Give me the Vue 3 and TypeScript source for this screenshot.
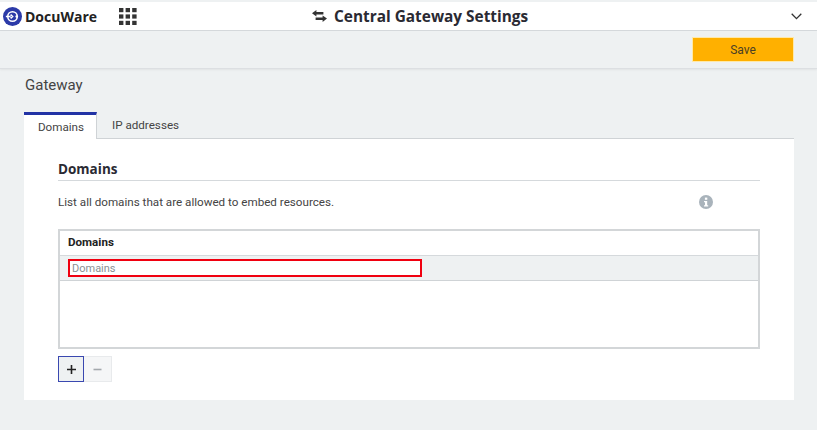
<script setup lang="ts">
const title = 'Central Gateway Settings'
const tabs = ['Domains', 'IP addresses']
</script>

<template>
  <div class="page">
    <header class="header">
      <div class="brand">
        <svg class="logo" width="19" height="19" viewBox="0 0 20 20">
          <circle cx="10" cy="10" r="10" fill="#2b3aa8" />
          <circle cx="10" cy="10" r="5" fill="none" stroke="#fff" stroke-width="1.6" />
          <path d="M3 10h5M8 8l2.2 2L8 12" fill="none" stroke="#fff" stroke-width="1.5" />
          <circle cx="14.5" cy="10" r="1.4" fill="#fff" />
        </svg>
        <span class="brand-name">DocuWare</span>
        <svg class="apps" width="18" height="17" viewBox="0 0 18 17">
          <g fill="#333">
            <rect x="0" y="0" width="4.4" height="4.2" /><rect x="6.6" y="0" width="4.4" height="4.2" /><rect x="13.2" y="0" width="4.4" height="4.2" />
            <rect x="0" y="6.4" width="4.4" height="4.2" /><rect x="6.6" y="6.4" width="4.4" height="4.2" /><rect x="13.2" y="6.4" width="4.4" height="4.2" />
            <rect x="0" y="12.8" width="4.4" height="4.2" /><rect x="6.6" y="12.8" width="4.4" height="4.2" /><rect x="13.2" y="12.8" width="4.4" height="4.2" />
          </g>
        </svg>
      </div>
      <div class="title">
        <svg width="15" height="12" viewBox="0 0 15 12">
          <path d="M0 3.2 4.4 0v2h7v2.4h-7v2zM15 8.6 10.6 5.6v2h-7V10h7v2z" fill="#333" />
        </svg>
        <span>{{ title }}</span>
      </div>
      <svg class="chevron" width="11" height="7" viewBox="0 0 11 7">
        <path d="M.7.8 5.5 5.6 10.3.8" fill="none" stroke="#333" stroke-width="1.3" />
      </svg>
    </header>

    <div class="toolbar">
      <button class="save" type="button">Save</button>
    </div>

    <main class="content">
      <h1 class="page-title">Gateway</h1>
      <div class="tabs">
        <div
          v-for="(tab, i) in tabs"
          :key="tab"
          class="tab"
          :class="{ active: i === 0 }"
        >{{ tab }}</div>
        <div class="tab-rest"></div>
      </div>
      <section class="panel">
        <h2 class="section-title">Domains</h2>
        <div class="desc-row">
          <p class="desc">List all domains that are allowed to embed resources.</p>
          <svg class="info" width="14" height="14" viewBox="0 0 14 14">
            <circle cx="7" cy="7" r="7" fill="#a9b3bb" />
            <rect x="5.9" y="2.6" width="2.4" height="2.2" fill="#fff" />
            <path d="M5 6h3.2v4.2h1v1.2H5v-1.2h1V7.2H5z" fill="#fff" />
          </svg>
        </div>
        <div class="table">
          <div class="table-head">Domains</div>
          <div class="table-row">
            <input class="cell-input" type="text" placeholder="Domains" />
          </div>
          <div class="table-empty"></div>
        </div>
        <div class="actions">
          <button class="act add" type="button">
            <svg width="11" height="11" viewBox="0 0 11 11"><path d="M5.5 1v9M1 5.5h9" stroke="#222" stroke-width="1.6" /></svg>
          </button>
          <button class="act remove" type="button">
            <svg width="11" height="11" viewBox="0 0 11 11"><path d="M1.5 5.5h8" stroke="#a4a9ad" stroke-width="1.6" /></svg>
          </button>
        </div>
      </section>
    </main>
  </div>
</template>

<style>
html, body { margin: 0; background: #eef1f2; }
</style>

<style scoped>
.page {
  width: 817px;
  height: 430px;
  overflow: hidden;
  background: #eef1f2;
  font-family: Roboto, "Open Sans", sans-serif;
  color: #333;
  font-size: 11.65px;
}
.header {
  height: 29px;
  box-sizing: border-box;
  margin-top: 2px;
  background: #fff;
  border-bottom: 1px solid #d5d9dc;
  display: grid;
  grid-template-columns: 309px 1fr auto;
  align-items: center;
  padding: 0 15px 0 3px;
}
.brand { display: flex; align-items: center; }
.logo { flex: none; }
.brand-name {
  margin-left: 3px;
  font-family: "Open Sans", sans-serif;
  font-size: 14px;
  font-weight: 700;
  color: #222;
  width: 94px;
}
.title {
  display: flex;
  align-items: center;
  gap: 7px;
  font-family: "Open Sans", sans-serif;
  font-size: 15.4px;
  font-weight: 700;
  color: #2a2a33;
}
.toolbar {
  height: 38px;
  box-sizing: border-box;
  display: flex;
  justify-content: flex-end;
  align-items: center;
  padding-right: 23px;
  border-bottom: 1px solid #dcdfe2;
  box-shadow: 0 1px 2px rgba(0, 0, 0, .06);
}
.save {
  width: 102px;
  height: 25px;
  border: 1px solid #ffe9a8;
  background: #ffb000;
  font: inherit;
  font-size: 12px;
  color: #4a4026;
  padding: 0;
}
.content { padding: 0 23px 0 24px; }
.page-title {
  margin: 5px 0 0 1px;
  font-size: 15px;
  line-height: 22px;
  font-weight: 400;
  color: #444;
}
.tabs {
  display: flex;
  margin-top: 16px;
  height: 27px;
}
.tab {
  padding: 0 15px;
  line-height: 27px;
  color: #444;
  border-bottom: 1px solid #cfd3d6;
  box-sizing: border-box;
}
.tab.active {
  width: 73px;
  padding: 0 0 0 2px;
  text-align: center;
  background: #fff;
  border-top: 3px solid #2233a5;
  border-right: 1px solid #cfd3d6;
  border-bottom: none;
  line-height: 24px;
}
.tab-rest { flex: 1; border-bottom: 1px solid #cfd3d6; }
.panel {
  background: #fff;
  height: 261px;
  padding: 20px 34px 0 34px;
  box-sizing: border-box;
}
.section-title {
  margin: 0;
  font-family: "Open Sans", sans-serif;
  font-size: 13.5px;
  line-height: 21px;
  font-weight: 700;
  color: #2a2a33;
  border-bottom: 1px solid #d5d9dc;
}
.desc-row {
  display: flex;
  justify-content: space-between;
  align-items: center;
  margin-top: 13px;
  padding-right: 47px;
}
.desc { margin: 0; line-height: 16px; color: #444; }
.info { flex: none; }
.table {
  margin-top: 19px;
  height: 120px;
  box-sizing: border-box;
  border: 2px solid #d3d6d8;
  display: flex;
  flex-direction: column;
}
.table-head {
  height: 24px;
  line-height: 23px;
  padding-left: 8px;
  font-weight: 700;
  font-size: 11.6px;
  color: #222;
}
.table-row {
  height: 26px;
  box-sizing: border-box;
  background: #eef1f2;
  border-top: 1px solid #d5d9dc;
  border-bottom: 1px solid #cfd3d6;
  display: flex;
  align-items: center;
  padding-left: 8px;
}
.cell-input {
  width: 354px;
  height: 18px;
  box-sizing: border-box;
  border: 2px solid #f00010;
  background: #fff;
  padding: 0 2px;
  font: inherit;
  font-size: 11px;
  outline: none;
}
.cell-input::placeholder { color: #8a8f93; opacity: 1; }
.table-empty { flex: 1; }
.actions { display: flex; margin-top: 7px; }
.act {
  width: 26px;
  height: 26px;
  padding: 0;
  display: flex;
  align-items: center;
  justify-content: center;
  box-sizing: border-box;
}
.add { background: #eef1f2; border: 1px solid #3a48b0; }
.remove { width: 28px; background: #f5f6f7; border: 1px solid #e8eaec; border-left: none; }
</style>
